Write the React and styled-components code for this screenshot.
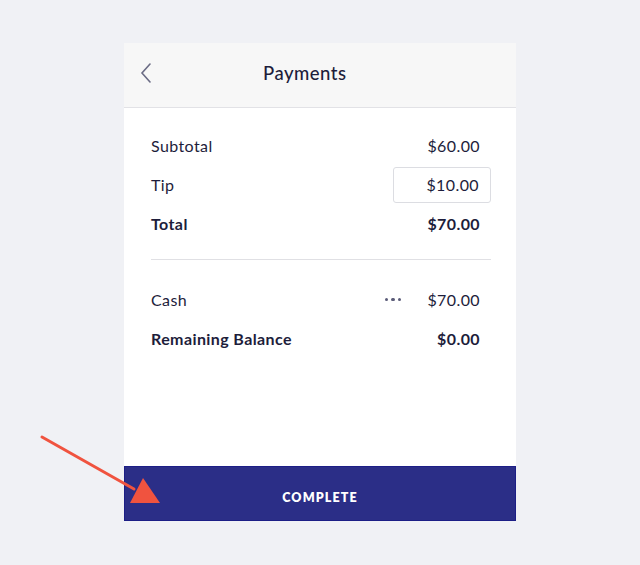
import React from 'react';
import styled, { createGlobalStyle } from 'styled-components';

const GlobalStyle = createGlobalStyle`
  html, body {
    margin: 0;
    padding: 0;
    background: #f0f1f5;
    font-family: "Lato", "Noto Sans", sans-serif;
    color: #1d1d3b;
  }
`;

const Page = styled.div`
  position: relative;
  width: 640px;
  height: 565px;
  padding-top: 43px;
  box-sizing: border-box;
`;

const Card = styled.div`
  margin-left: 124px;
  width: 392px;
  height: 478px;
  display: flex;
  flex-direction: column;
  background: #ffffff;
`;

const Header = styled.div`
  height: 65px;
  box-sizing: border-box;
  display: flex;
  align-items: center;
  background: #f7f7f7;
  border-bottom: 1px solid #e2e2e6;
  padding: 0 0 5px 13px;
`;

const BackButton = styled.button`
  width: 18px;
  height: 24px;
  border: 0;
  padding: 0;
  background: none;
  display: flex;
  align-items: center;
  justify-content: center;
`;

const Title = styled.h1`
  margin: 0 0 0 108px;
  font-size: 18.5px;
  font-weight: 500;
  letter-spacing: 0.5px;
  color: #1d1d3b;
`;

const Body = styled.div`
  flex: 1;
  padding: 18px 25px 0 27px;
`;

const Row = styled.div`
  height: 39px;
  display: flex;
  align-items: center;
  justify-content: space-between;
  font-size: 16px;
  letter-spacing: 0.4px;
  font-weight: ${({ bold }) => (bold ? 700 : 400)};
`;

const Value = styled.span`
  padding-right: 11px;
  display: flex;
  align-items: center;
  gap: 26px;
`;

const TipInput = styled.div`
  width: 98px;
  height: 36px;
  box-sizing: border-box;
  border: 1px solid #dcdde2;
  border-radius: 3px;
  display: flex;
  align-items: center;
  justify-content: flex-end;
  padding-right: 11px;
`;

const Divider = styled.hr`
  border: 0;
  border-top: 1px solid #e0e0e4;
  margin: 16px 0 20px;
`;

const Dots = styled.span`
  display: flex;
  gap: 3px;
  span {
    width: 3.5px;
    height: 3.5px;
    border-radius: 50%;
    background: #5a5b78;
  }
`;

const CompleteButton = styled.button`
  height: 55px;
  border: 1px solid #1c1e86;
  background: #2b2e87;
  color: #ffffff;
  padding-top: 8px;
  font-family: "Lato", sans-serif;
  font-size: 12.5px;
  font-weight: 800;
  letter-spacing: 1.1px;
`;

const Arrow = styled.svg`
  position: absolute;
  left: 0;
  top: 0;
  pointer-events: none;
`;

export default function App() {
  return (
    <Page>
      <GlobalStyle />
      <Card>
        <Header>
          <BackButton>
            <svg width="12" height="20" viewBox="0 0 12 20">
              <path d="M10 1 L2 10 L10 19" fill="none" stroke="#6b6c85" strokeWidth="1.6" strokeLinecap="round" />
            </svg>
          </BackButton>
          <Title>Payments</Title>
        </Header>
        <Body>
          <Row>
            <span>Subtotal</span>
            <Value>$60.00</Value>
          </Row>
          <Row>
            <span>Tip</span>
            <TipInput>$10.00</TipInput>
          </Row>
          <Row bold>
            <span>Total</span>
            <Value>$70.00</Value>
          </Row>
          <Divider />
          <Row>
            <span>Cash</span>
            <Value>
              <Dots><span /><span /><span /></Dots>
              $70.00
            </Value>
          </Row>
          <Row bold>
            <span>Remaining Balance</span>
            <Value>$0.00</Value>
          </Row>
        </Body>
        <CompleteButton>COMPLETE</CompleteButton>
      </Card>
      <Arrow width="640" height="565">
        <line x1="42" y1="437" x2="134" y2="489" stroke="#f0533f" strokeWidth="3" strokeLinecap="round" />
        <polygon points="130,503 143,478 160,503" fill="#f0533f" />
      </Arrow>
    </Page>
  );
}
